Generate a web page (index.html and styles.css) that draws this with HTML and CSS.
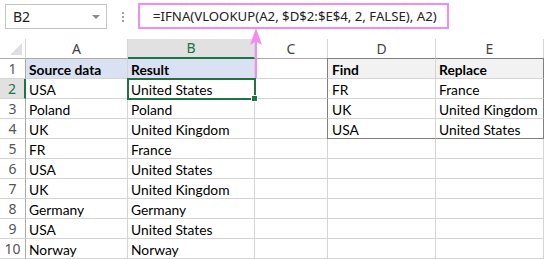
FILE: index.html
```html
<!DOCTYPE html>
<html lang="en">
<head>
<meta charset="UTF-8">
<title>IFNA VLOOKUP</title>
<link rel="stylesheet" href="styles.css">
</head>
<body>
  <div class="topbar">
    <div class="namebox">
      <span>B2</span>
      <span class="caret"></span>
    </div>
    <div class="dots"><i></i><i></i><i></i></div>
    <div class="formula">=IFNA(VLOOKUP(A2, $D$2:$E$4, 2, FALSE), A2)</div>
  </div>

  <div class="sheet">
    <div class="hd corner"></div>
    <div class="hd">A</div>
    <div class="hd sel-col">B</div>
    <div class="hd">C</div>
    <div class="hd">D</div>
    <div class="hd">E</div>

    <div class="rn">1</div>
    <div class="c blue b">Source data</div>
    <div class="c blue b">Result</div>
    <div class="c"></div>
    <div class="c grey b tl">Find</div>
    <div class="c grey b tr">Replace</div>

    <div class="rn sel-row">2</div>
    <div class="c">USA</div>
    <div class="c active">United States<span class="handle"></span></div>
    <div class="c"></div>
    <div class="c tl">FR</div>
    <div class="c tr">France</div>

    <div class="rn">3</div>
    <div class="c">Poland</div>
    <div class="c">Poland</div>
    <div class="c"></div>
    <div class="c tl">UK</div>
    <div class="c tr">United Kingdom</div>

    <div class="rn">4</div>
    <div class="c">UK</div>
    <div class="c">United Kingdom</div>
    <div class="c"></div>
    <div class="c tl tb">USA</div>
    <div class="c tr tb">United States</div>

    <div class="rn">5</div>
    <div class="c">FR</div>
    <div class="c">France</div>
    <div class="c"></div>
    <div class="c"></div>
    <div class="c"></div>

    <div class="rn">6</div>
    <div class="c">USA</div>
    <div class="c">United States</div>
    <div class="c"></div>
    <div class="c"></div>
    <div class="c"></div>

    <div class="rn">7</div>
    <div class="c">UK</div>
    <div class="c">United Kingdom</div>
    <div class="c"></div>
    <div class="c"></div>
    <div class="c"></div>

    <div class="rn">8</div>
    <div class="c">Germany</div>
    <div class="c">Germany</div>
    <div class="c"></div>
    <div class="c"></div>
    <div class="c"></div>

    <div class="rn">9</div>
    <div class="c">USA</div>
    <div class="c">United States</div>
    <div class="c"></div>
    <div class="c"></div>
    <div class="c"></div>

    <div class="rn">10</div>
    <div class="c">Norway</div>
    <div class="c">Norway</div>
    <div class="c"></div>
    <div class="c"></div>
    <div class="c"></div>
  </div>

  <!-- pointer from the formula bar down to the selected cell -->
  <svg class="arrow" width="16" height="52" viewBox="0 0 16 52">
    <path d="M8 0 L14 17 L9 14 L9 50 L7 50 L7 14 L2 17 Z" fill="#f28cf0"/>
  </svg>
</body>
</html>
```
FILE: styles.css
```css
body {
  margin: 0;
  background: #ffffff;
  font-family: "Noto Sans", sans-serif;
  color: #000000;
  position: relative;
  width: 544px;
  height: 259px;
  overflow: hidden;
}

.topbar {
  height: 39px;
  display: flex;
  align-items: flex-start;
  padding-top: 4px;
  box-sizing: border-box;
}

.namebox {
  margin-left: 5px;
  width: 102px;
  height: 25px;
  border: 1px solid #c6c6c6;
  box-sizing: border-box;
  display: flex;
  align-items: center;
  justify-content: space-between;
  padding: 0 6px 0 7px;
  font-size: 14px;
  color: #222222;
}

.caret {
  width: 0;
  height: 0;
  border-left: 4px solid transparent;
  border-right: 4px solid transparent;
  border-top: 4px solid #8a8a8a;
}

.dots {
  width: 31px;
  height: 25px;
  display: flex;
  flex-direction: column;
  align-items: center;
  justify-content: center;
  gap: 2px;
}

.dots i {
  width: 2px;
  height: 2px;
  background: #a0a0a0;
}

.formula {
  margin-top: -1px;
  width: 311px;
  height: 26px;
  border: 2px solid #f28cf0;
  box-sizing: border-box;
  padding-left: 13px;
  font-size: 13.2px;
  line-height: 22px;
  color: #222222;
  white-space: nowrap;
}

.sheet {
  display: grid;
  grid-template-columns: 26px 102px 127px 73px 108px 108px;
  grid-auto-rows: 20px;
  font-family: Lato, sans-serif;
  font-size: 13.8px;
}

.hd, .rn, .c {
  box-sizing: border-box;
  border-right: 1px solid #d4d4d4;
  border-bottom: 1px solid #d4d4d4;
  white-space: nowrap;
  position: relative;
}

.hd {
  border-bottom-color: #ababab;
  text-align: center;
  color: #444444;
  font-size: 14px;
  line-height: 19px;
  font-family: "Noto Sans", sans-serif;
}

.corner::after {
  content: "";
  position: absolute;
  right: 3px;
  bottom: 3px;
  border-left: 12px solid transparent;
  border-bottom: 12px solid #dfdfdf;
}

.sel-col {
  background: #e1e1e1;
  color: #217346;
  border-bottom: 2px solid #217346;
  line-height: 18px;
}

.rn {
  border-right-color: #ababab;
  text-align: center;
  color: #555555;
  line-height: 20px;
  font-size: 14px;
  font-family: "Noto Sans", sans-serif;
}

.sel-row {
  background: #e1e1e1;
  color: #217346;
  border-right: 2px solid #217346;
}

.c {
  padding: 1px 0 0 3px;
  line-height: 19px;
}

.b {
  font-weight: bold;
}

.blue {
  background: #d9e1f2;
}

.grey {
  background: #f2f2f2;
}

.tl {
  border-left: 1px solid #7f7f7f;
  margin-left: -1px;
  padding-left: 4px;
}

.tr {
  border-right-color: #7f7f7f;
}

.grey.tl, .grey.tr {
  border-top: 1px solid #7f7f7f;
  margin-top: -1px;
}

.tb {
  border-bottom-color: #7f7f7f;
}

.active {
  outline: 2px solid #217346;
  outline-offset: -1px;
  z-index: 1;
}

.handle {
  position: absolute;
  right: -4px;
  bottom: -4px;
  width: 5px;
  height: 5px;
  background: #217346;
  border: 1px solid #ffffff;
}

.arrow {
  position: absolute;
  left: 248px;
  top: 28px;
}
```
